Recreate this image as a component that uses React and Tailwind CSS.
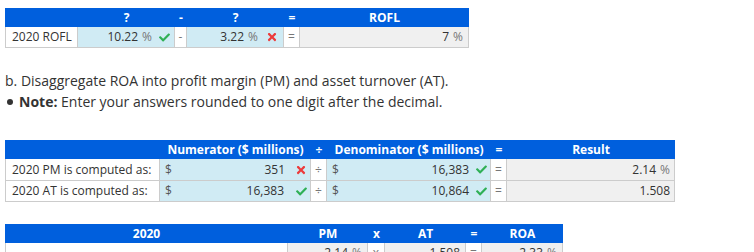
import React from "react";
import { FaCheck, FaTimes } from "react-icons/fa";

const Ok = () => <FaCheck className="text-[#2fb055] shrink-0" size={11} />;
const Bad = () => <FaTimes className="text-[#ec3b3b] shrink-0" size={12} />;

const Pct = () => <span className="text-[#777] ml-[4px]">%</span>;

function HeadCell({ w, children, className = "" }) {
  return (
    <div className={`flex items-center justify-center shrink-0 ${className}`} style={{ width: w }}>
      {children}
    </div>
  );
}

function Cell({ w, children, className = "" }) {
  return (
    <div
      className={`flex items-center shrink-0 h-full border-r border-[#cccccc] ${className}`}
      style={{ width: w }}
    >
      {children}
    </div>
  );
}

const headRow = "flex h-[19px] bg-[#005fdd] text-white font-bold";
const dataRow = "flex h-[21px] border-b border-l border-[#cccccc] text-[#333]";

export default function App() {
  return (
    <div className="pl-[5px] pt-[8px] font-['Open_Sans',sans-serif] text-[12px] text-[#333] bg-white min-h-screen">
      {/* Table 1 */}
      <div className="w-[464px]">
        <div className={headRow}>
          <HeadCell w={73} />
          <HeadCell w={97}>?</HeadCell>
          <HeadCell w={12}>-</HeadCell>
          <HeadCell w={97}>?</HeadCell>
          <HeadCell w={16}>=</HeadCell>
          <HeadCell w={169}>ROFL</HeadCell>
        </div>
        <div className={dataRow}>
          <Cell w={72} className="pl-[6px] bg-white">2020 ROFL</Cell>
          <Cell w={97} className="justify-end pr-[4px] bg-[#d0ebf4]">
            <span>10.22</span>
            <Pct />
            <span className="w-[7px]" />
            <Ok />
          </Cell>
          <Cell w={12} className="justify-center text-[#777] bg-white">-</Cell>
          <Cell w={97} className="justify-end pr-[5px] bg-[#d0ebf4]">
            <span>3.22</span>
            <Pct />
            <span className="w-[8px]" />
            <Bad />
          </Cell>
          <Cell w={16} className="justify-center text-[#777] bg-white">=</Cell>
          <Cell w={169} className="justify-end pr-[5px] bg-[#f0f0f0]">
            <span>7</span>
            <Pct />
          </Cell>
        </div>
      </div>

      {/* Text */}
      <div className="mt-[22px] text-[14px] leading-[21px] text-[#333]">
        <p>b. Disaggregate ROA into profit margin (PM) and asset turnover (AT).</p>
        <p className="flex items-center">
          <span className="inline-block w-[6px] h-[6px] rounded-full bg-[#333] ml-[2px] mr-[6px]" />
          <span>
            <span className="font-bold">Note:</span> Enter your answers rounded to one digit after the decimal.
          </span>
        </p>
      </div>

      {/* Table 2 */}
      <div className="w-[670px] mt-[28px]">
        <div className={headRow}>
          <HeadCell w={155} />
          <HeadCell w={151}>Numerator ($ millions)</HeadCell>
          <HeadCell w={16}>÷</HeadCell>
          <HeadCell w={164}>Denominator ($ millions)</HeadCell>
          <HeadCell w={16}>=</HeadCell>
          <HeadCell w={168}>Result</HeadCell>
        </div>
        <div className={`${dataRow} h-[22px]`}>
          <Cell w={154} className="pl-[6px] bg-white">2020 PM is computed as:</Cell>
          <Cell w={151} className="justify-between pl-[5px] pr-[3px] bg-[#d0ebf4]">
            <span className="text-[#555]">$</span>
            <span className="flex items-center">
              <span>351</span>
              <span className="w-[10px]" />
              <Bad />
            </span>
          </Cell>
          <Cell w={16} className="justify-center text-[#777] bg-white">÷</Cell>
          <Cell w={164} className="justify-between pl-[5px] pr-[3px] bg-[#d0ebf4]">
            <span className="text-[#555]">$</span>
            <span className="flex items-center">
              <span>16,383</span>
              <span className="w-[7px]" />
              <Ok />
            </span>
          </Cell>
          <Cell w={16} className="justify-center text-[#777] bg-white">=</Cell>
          <Cell w={168} className="justify-end pr-[4px] bg-[#f0f0f0]">
            <span>2.14</span>
            <Pct />
          </Cell>
        </div>
        <div className={dataRow}>
          <Cell w={154} className="pl-[6px] bg-white">2020 AT is computed as:</Cell>
          <Cell w={151} className="justify-between pl-[5px] pr-[3px] bg-[#d0ebf4]">
            <span className="text-[#555]">$</span>
            <span className="flex items-center">
              <span>16,383</span>
              <span className="w-[12px]" />
              <Ok />
            </span>
          </Cell>
          <Cell w={16} className="justify-center text-[#777] bg-white">÷</Cell>
          <Cell w={164} className="justify-between pl-[5px] pr-[3px] bg-[#d0ebf4]">
            <span className="text-[#555]">$</span>
            <span className="flex items-center">
              <span>10,864</span>
              <span className="w-[7px]" />
              <Ok />
            </span>
          </Cell>
          <Cell w={16} className="justify-center text-[#777] bg-white">=</Cell>
          <Cell w={168} className="justify-end pr-[4px] bg-[#f0f0f0]">
            <span>1.508</span>
          </Cell>
        </div>
      </div>

      {/* Table 3 */}
      <div className="w-[558px] mt-[22px]">
        <div className={headRow}>
          <HeadCell w={283}>2020</HeadCell>
          <HeadCell w={80}>PM</HeadCell>
          <HeadCell w={17}>x</HeadCell>
          <HeadCell w={81}>AT</HeadCell>
          <HeadCell w={16}>=</HeadCell>
          <HeadCell w={81}>ROA</HeadCell>
        </div>
        <div className={dataRow}>
          <Cell w={282} className="bg-white" />
          <Cell w={80} className="justify-end pr-[5px] bg-[#f0f0f0]">
            <span>2.14</span>
            <Pct />
          </Cell>
          <Cell w={17} className="justify-center text-[#777] bg-white">x</Cell>
          <Cell w={81} className="justify-end pr-[5px] bg-[#f0f0f0]">
            <span>1.508</span>
          </Cell>
          <Cell w={16} className="justify-center text-[#777] bg-white">=</Cell>
          <Cell w={81} className="justify-end pr-[5px] bg-[#f0f0f0]">
            <span>2.33</span>
            <Pct />
          </Cell>
        </div>
      </div>
    </div>
  );
}
